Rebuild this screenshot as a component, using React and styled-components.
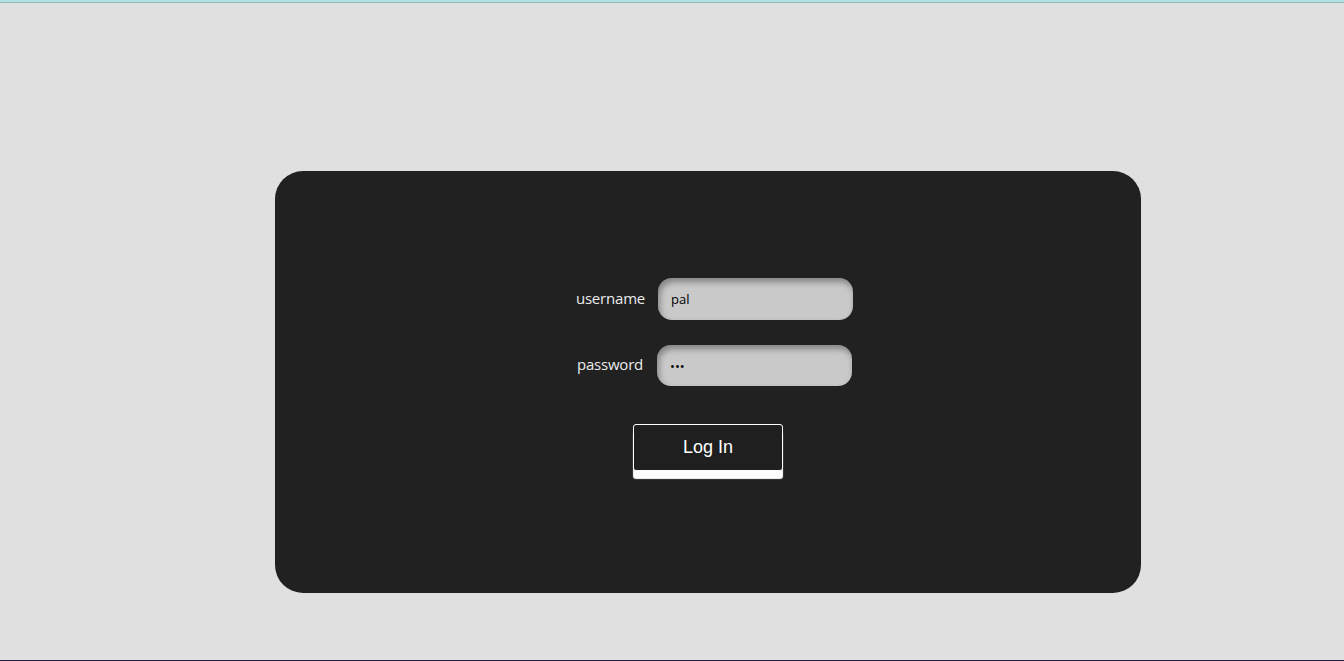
import React from 'react';
import styled, { createGlobalStyle } from 'styled-components';

const GlobalStyle = createGlobalStyle`
  html, body {
    margin: 0;
    padding: 0;
    background: #e0e0e0;
    font-family: "Open Sans", "Noto Sans", sans-serif;
  }
`;

const Page = styled.div`
  height: 661px;
  box-sizing: border-box;
  border-top: 2px solid #b3dfe1;
  border-bottom: 1px solid #252043;
  padding: 169px 0 0 275px;
  box-shadow: inset 0 1px 0 #8ebcc0;
  overflow: hidden;
`;

const Card = styled.div`
  width: 866px;
  height: 422px;
  box-sizing: border-box;
  background: #212121;
  border-radius: 28px;
  padding-top: 107px;
  display: flex;
  flex-direction: column;
  align-items: center;
`;

const Row = styled.div`
  display: flex;
  align-items: center;
  gap: ${(p) => p.gap}px;
  padding-left: 13px;
  margin-bottom: ${(p) => p.mb}px;
`;

const Label = styled.label`
  color: #ececec;
  font-size: 15px;
  letter-spacing: -0.2px;
  margin-top: ${(p) => p.shift}px;
`;

const Input = styled.input`
  width: 195px;
  height: ${(p) => p.h}px;
  box-sizing: border-box;
  border: none;
  outline: none;
  border-radius: 14px;
  background: #c9c9c9;
  box-shadow: inset 2px 4px 6px rgba(0, 0, 0, 0.35);
  padding: 0 13px;
  font-family: "Open Sans", "Noto Sans", sans-serif;
  font-size: 13px;
  color: #000;
`;

const Button = styled.button`
  margin-top: 38px;
  width: 150px;
  height: 47px;
  background: #1f1f1f;
  color: #fff;
  border: 1px solid #fff;
  border-radius: 3px;
  box-shadow: 0 8px 1px #fff;
  font-family: "Liberation Sans", Arial, sans-serif;
  font-size: 18px;
  cursor: pointer;
`;

export default function App() {
  return (
    <>
      <GlobalStyle />
      <Page>
        <Card>
          <Row gap={13} mb={25}>
            <Label shift={-2}>username</Label>
            <Input type="text" h={42} defaultValue="pal" />
          </Row>
          <Row gap={14} mb={0}>
            <Label shift={-4}>password</Label>
            <Input type="password" h={41} defaultValue="pal" />
          </Row>
          <Button>Log In</Button>
        </Card>
      </Page>
    </>
  );
}
